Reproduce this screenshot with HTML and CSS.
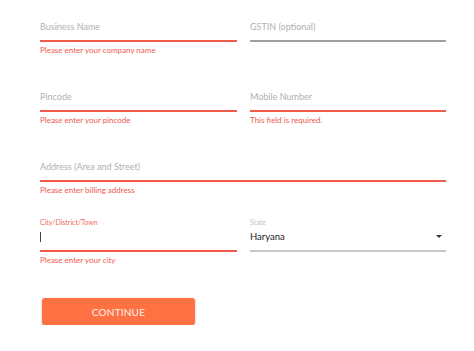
FILE: index.html
```html
<!DOCTYPE html>
<html>
<head>
<meta charset="utf-8">
<link rel="stylesheet" href="styles.css">
</head>
<body>
<form class="form">
  <div class="row">
    <div class="field">
      <div class="control invalid"><span class="placeholder">Business Name</span></div>
      <div class="error">Please enter your company name</div>
    </div>
    <div class="field">
      <div class="control neutral"><span class="placeholder">GSTIN (optional)</span></div>
    </div>
  </div>
  <div class="row">
    <div class="field">
      <div class="control invalid"><span class="placeholder">Pincode</span></div>
      <div class="error">Please enter your pincode</div>
    </div>
    <div class="field">
      <div class="control invalid"><span class="placeholder">Mobile Number</span></div>
      <div class="error">This field is required.</div>
    </div>
  </div>
  <div class="row single">
    <div class="field">
      <div class="control invalid"><span class="placeholder">Address (Area and Street)</span></div>
      <div class="error">Please enter billing address</div>
    </div>
  </div>
  <div class="row">
    <div class="field">
      <div class="control invalid floated">
        <span class="float-label red">City/District/Town</span>
        <span class="value"><span class="cursor"></span></span>
      </div>
      <div class="error">Please enter your city</div>
    </div>
    <div class="field">
      <div class="control light floated">
        <span class="float-label">State</span>
        <span class="value select">Haryana<span class="caret"></span></span>
      </div>
    </div>
  </div>
  <button type="button" class="btn">CONTINUE</button>
</form>
</body>
</html>
```
FILE: styles.css
```css
* { box-sizing: border-box; }
html, body { margin: 0; padding: 0; background: #ffffff; }
body { font-family: "Lato", "Noto Sans", sans-serif; }
.form { padding: 0 0 0 40px; width: 446px; }
.row {
  display: grid;
  grid-template-columns: 197px 196px;
  column-gap: 13px;
  height: 70px;
}
.row.single { grid-template-columns: 406px; }
.field { display: flex; flex-direction: column; }
.control {
  height: 42px;
  border-bottom: 2px solid #ef5a4c;
  display: flex;
  flex-direction: column;
  justify-content: flex-end;
  padding-bottom: 3px;
}
.control.neutral { border-bottom-color: #a0a0a0; }
.control.light { border-bottom-color: #c9c9c9; }
.placeholder {
  font-size: 9px;
  line-height: 20px;
  color: #b0b0b0;
}
.error {
  margin-top: 3px;
  font-size: 8px;
  line-height: 10px;
  color: #ef5a4c;
}
.floated { padding-bottom: 3px; }
.float-label {
  font-size: 7px;
  line-height: 8px;
  color: #c2c2c2;
}
.float-label.red { color: #ef6a5c; }
.value {
  height: 21px;
  display: flex;
  align-items: center;
  font-size: 9.5px;
  color: #222;
}
.select { justify-content: space-between; padding-right: 4px; }
.cursor {
  display: block;
  width: 1px;
  height: 10px;
  background: #444;
}
.caret {
  width: 0;
  height: 0;
  border-left: 3px solid transparent;
  border-right: 3px solid transparent;
  border-top: 3px solid #333;
}
.btn {
  display: block;
  margin: 18px 0 0 2px;
  width: 153px;
  height: 27px;
  border: none;
  border-radius: 3px;
  background: #ff7043;
  color: #fff3ea;
  font-family: "Lato", "Noto Sans", sans-serif;
  font-size: 10px;
  letter-spacing: 0.2px;
  box-shadow: 0 1px 3px rgba(0,0,0,0.25);
  padding: 0;
}
```
